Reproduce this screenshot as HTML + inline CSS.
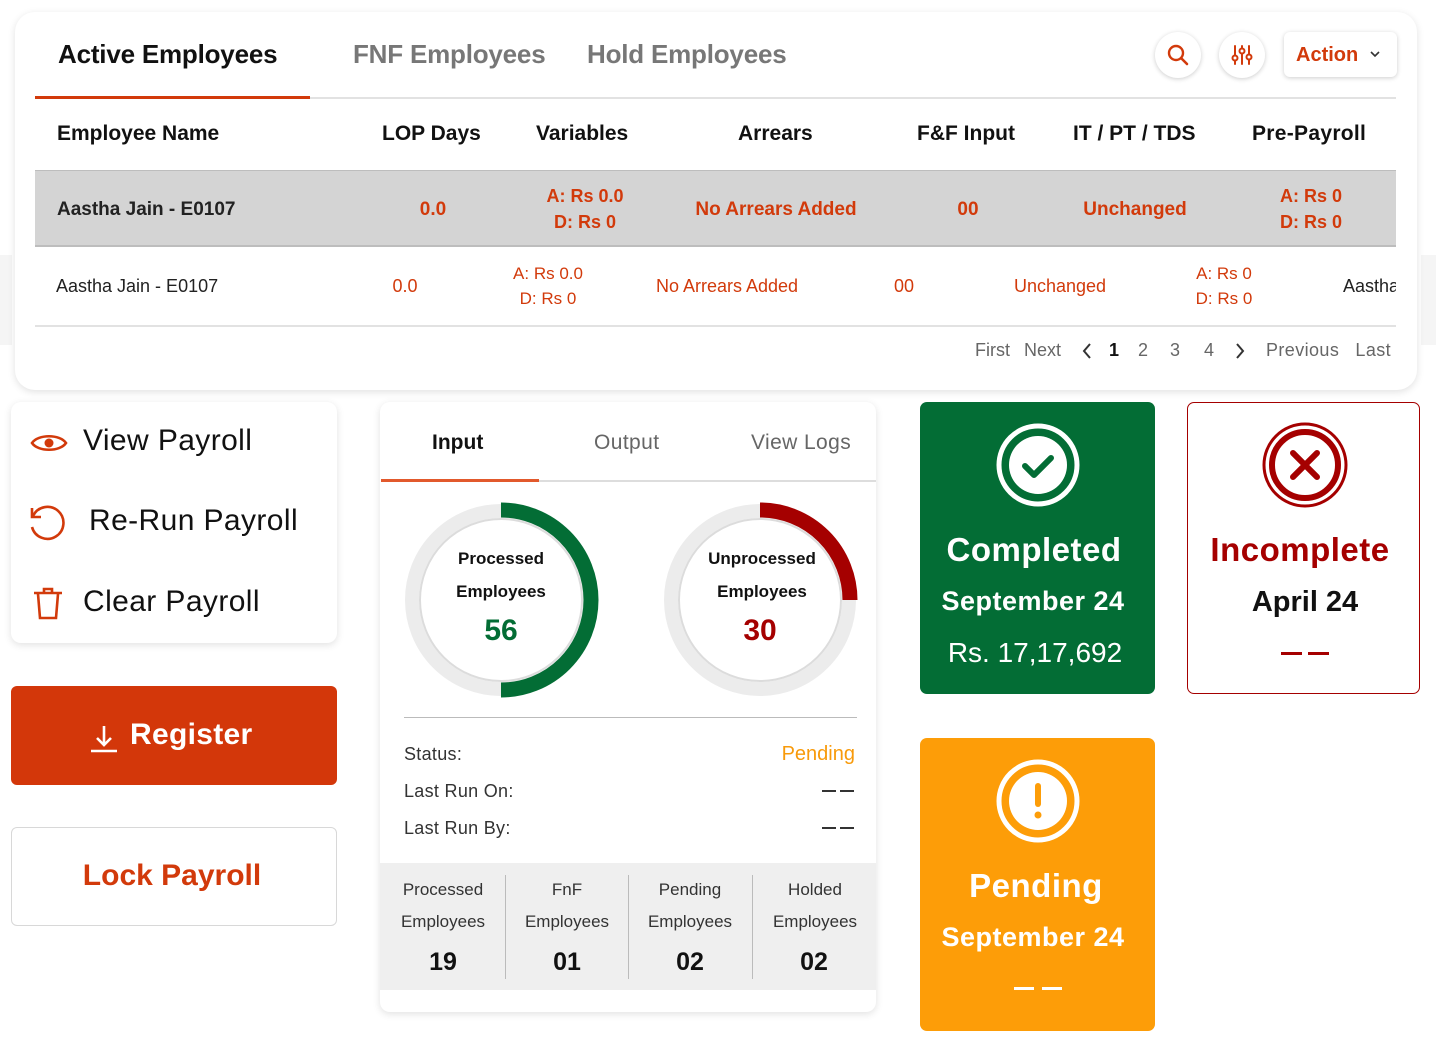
<!DOCTYPE html>
<html><head><meta charset="utf-8">
<style>
*{margin:0;padding:0;box-sizing:border-box}
html,body{width:1436px;height:1059px;background:#fff;overflow:hidden;font-family:"Liberation Sans",sans-serif;color:#111}
.a{position:absolute;white-space:nowrap}
.c{transform:translateX(-50%);text-align:center}
.red{color:#d23a0b}
.card{position:absolute;background:#fff;border-radius:14px;box-shadow:0 2px 8px rgba(0,0,0,.12)}
.b{font-weight:bold}
</style></head><body>

<div class="a" style="left:0;top:255px;width:12px;height:90px;background:#f5f5f5"></div>
<div class="a" style="left:1421px;top:255px;width:15px;height:90px;background:#f5f5f5"></div>

<!-- TOP CARD -->
<div class="card" style="left:15px;top:12px;width:1402px;height:378px;border-radius:20px"></div>
<div class="a b" style="left:58px;top:39px;font-size:26px;color:#111;letter-spacing:-0.2px">Active Employees</div>
<div class="a b" style="left:353px;top:39px;font-size:26px;color:#777;letter-spacing:-0.2px">FNF Employees</div>
<div class="a b" style="left:587px;top:39px;font-size:26px;color:#777;letter-spacing:-0.2px">Hold Employees</div>
<div class="a" style="left:35px;top:97px;width:1361px;height:2px;background:#e2e2e2"></div>
<div class="a" style="left:35px;top:96px;width:275px;height:3px;background:#d23a0b"></div>

<div class="a" style="left:1155px;top:32px;width:46px;height:46px;border-radius:50%;background:#fff;box-shadow:0 1px 5px rgba(0,0,0,.2)">
<svg width="46" height="46" viewBox="0 0 46 46"><circle cx="21" cy="21" r="7" fill="none" stroke="#d23a0b" stroke-width="2.4"/><path d="M26 26l6 6" stroke="#d23a0b" stroke-width="2.6" stroke-linecap="round"/></svg></div>
<div class="a" style="left:1219px;top:32px;width:46px;height:46px;border-radius:50%;background:#fff;box-shadow:0 1px 5px rgba(0,0,0,.2)">
<svg width="46" height="46" viewBox="0 0 46 46" stroke="#d23a0b" stroke-width="2" fill="none" stroke-linecap="round"><path d="M16 14v18M23 14v18M30 14v18"/><circle cx="16" cy="26" r="2.5" fill="#fff"/><circle cx="23" cy="19" r="2.5" fill="#fff"/><circle cx="30" cy="25" r="2.5" fill="#fff"/></svg></div>
<div class="a" style="left:1284px;top:32px;width:113px;height:45px;border-radius:6px;background:#fff;box-shadow:0 1px 5px rgba(0,0,0,.2)"></div>
<div class="a b red" style="left:1296px;top:44px;font-size:20px">Action</div>
<svg class="a" style="left:1369px;top:49px" width="12" height="10" viewBox="0 0 12 10"><path d="M2 3l4 4 4-4" stroke="#333" stroke-width="1.6" fill="none"/></svg>

<div class="a b" style="left:57px;top:122px;font-size:21px">Employee Name</div>
<div class="a b" style="left:382px;top:122px;font-size:21px">LOP Days</div>
<div class="a b" style="left:536px;top:122px;font-size:21px">Variables</div>
<div class="a b" style="left:738px;top:122px;font-size:21px">Arrears</div>
<div class="a b" style="left:917px;top:122px;font-size:21px">F&amp;F Input</div>
<div class="a b" style="left:1073px;top:122px;font-size:21px">IT / PT / TDS</div>
<div class="a b" style="left:1252px;top:122px;font-size:21px;letter-spacing:0.3px">Pre-Payroll</div>

<div class="a" style="left:35px;top:170px;width:1361px;height:77px;background:#d4d4d4;border-top:1px solid #bdbdbd;border-bottom:2px solid #bdbdbd"></div>
<div class="a b" style="left:57px;top:199px;font-size:19px;color:#222">Aastha Jain - E0107</div>
<div class="a b red c" style="left:433px;top:199px;font-size:19px">0.0</div>
<div class="a b red c" style="left:585px;top:183px;font-size:18px;line-height:26px">A: Rs 0.0<br>D: Rs 0</div>
<div class="a b red c" style="left:776px;top:199px;font-size:19px">No Arrears Added</div>
<div class="a b red c" style="left:968px;top:199px;font-size:19px">00</div>
<div class="a b red c" style="left:1135px;top:199px;font-size:19px">Unchanged</div>
<div class="a b red c" style="left:1311px;top:183px;font-size:18px;line-height:26px">A: Rs 0<br>D: Rs 0</div>

<div class="a" style="left:56px;top:276px;font-size:18px;color:#222">Aastha Jain - E0107</div>
<div class="a red c" style="left:405px;top:276px;font-size:18px">0.0</div>
<div class="a red c" style="left:548px;top:261px;font-size:17px;line-height:25px">A: Rs 0.0<br>D: Rs 0</div>
<div class="a red c" style="left:727px;top:276px;font-size:18px">No Arrears Added</div>
<div class="a red c" style="left:904px;top:276px;font-size:18px">00</div>
<div class="a red c" style="left:1060px;top:276px;font-size:18px">Unchanged</div>
<div class="a red c" style="left:1224px;top:261px;font-size:17px;line-height:25px">A: Rs 0<br>D: Rs 0</div>
<div class="a" style="left:1343px;top:276px;width:53px;overflow:hidden;font-size:18px;color:#222">Aastha</div>
<div class="a" style="left:35px;top:325px;width:1361px;height:2px;background:#e2e2e2"></div>

<div class="a" style="left:975px;top:340px;font-size:18px;color:#666;word-spacing:2px">First&nbsp; Next</div>
<svg class="a" style="left:1081px;top:342px" width="12" height="18" viewBox="0 0 12 18"><path d="M9 2L3 9l6 7" stroke="#333" stroke-width="2" fill="none"/></svg>
<div class="a b" style="left:1109px;top:340px;font-size:18px;color:#111">1</div>
<div class="a" style="left:1138px;top:340px;font-size:18px;color:#666">2</div>
<div class="a" style="left:1170px;top:340px;font-size:18px;color:#666">3</div>
<div class="a" style="left:1204px;top:340px;font-size:18px;color:#666">4</div>
<svg class="a" style="left:1234px;top:342px" width="12" height="18" viewBox="0 0 12 18"><path d="M3 2l6 7-6 7" stroke="#333" stroke-width="2" fill="none"/></svg>
<div class="a" style="left:1266px;top:340px;font-size:18px;color:#666;letter-spacing:0.4px">Previous&nbsp;&nbsp; Last</div>

<!-- LEFT MENU -->
<div class="card" style="left:11px;top:402px;width:326px;height:241px;border-radius:10px"></div>
<svg class="a" style="left:30px;top:430px" width="38" height="26" viewBox="0 0 38 26"><path d="M2 13C8 4 30 4 36 13C30 22 8 22 2 13Z" fill="none" stroke="#d23a0b" stroke-width="2.6"/><circle cx="19" cy="13" r="4.5" fill="#d23a0b"/></svg>
<div class="a" style="left:83px;top:424px;font-size:30px;color:#111;letter-spacing:0.4px">View Payroll</div>
<svg class="a" style="left:27px;top:503px" width="40" height="40" viewBox="0 0 40 40"><path d="M6 13A16 16 0 1 1 5 24" fill="none" stroke="#d23a0b" stroke-width="2.6"/><path d="M5 5v9h9" fill="none" stroke="#d23a0b" stroke-width="2.6"/></svg>
<div class="a" style="left:89px;top:504px;font-size:30px;color:#111;letter-spacing:0.4px">Re-Run Payroll</div>
<svg class="a" style="left:32px;top:585px" width="32" height="36" viewBox="0 0 32 36"><path d="M2 8h28M12 8V4h8v4M6 9l2 24h16l2-24" fill="none" stroke="#d23a0b" stroke-width="2.6"/></svg>
<div class="a" style="left:83px;top:585px;font-size:30px;color:#111;letter-spacing:0.4px">Clear Payroll</div>

<div class="a" style="left:11px;top:686px;width:326px;height:99px;background:#d3370a;border-radius:6px"></div>
<svg class="a" style="left:90px;top:723px" width="28" height="30" viewBox="0 0 28 30"><path d="M14 3v19M7 15l7 7 7-7M1 28h26" fill="none" stroke="#fff" stroke-width="2.6"/></svg>
<div class="a b" style="left:130px;top:718px;font-size:30px;color:#fff;letter-spacing:0.3px">Register</div>

<div class="a" style="left:11px;top:827px;width:326px;height:99px;border:1px solid #d8d8d8;border-radius:6px;background:#fff"></div>
<div class="a b red c" style="left:172px;top:859px;font-size:30px">Lock Payroll</div>

<!-- MIDDLE CARD -->
<div class="card" style="left:380px;top:402px;width:496px;height:610px;border-radius:10px;overflow:hidden">
 <div style="position:absolute;left:0;top:461px;width:496px;height:127px;background:#efefef"></div>
</div>
<div class="a b" style="left:432px;top:431px;font-size:21px;color:#111">Input</div>
<div class="a" style="left:594px;top:431px;font-size:21px;color:#666;letter-spacing:0.4px">Output</div>
<div class="a" style="left:751px;top:431px;font-size:21px;color:#666;letter-spacing:0.4px">View Logs</div>
<div class="a" style="left:381px;top:480px;width:495px;height:2px;background:#ddd"></div>
<div class="a" style="left:381px;top:479px;width:158px;height:3px;background:#e2592c"></div>

<svg class="a" style="left:400px;top:500px" width="470" height="200" viewBox="0 0 470 200">
 <circle cx="101" cy="100" r="89" fill="none" stroke="#ececec" stroke-width="14"/>
 <circle cx="101" cy="100" r="81" fill="none" stroke="#dcdcdc" stroke-width="2"/>
 <path d="M101 10A90 90 0 0 1 101 190" fill="none" stroke="#036d35" stroke-width="15"/>
 <circle cx="360" cy="100" r="89" fill="none" stroke="#ececec" stroke-width="14"/>
 <circle cx="360" cy="100" r="81" fill="none" stroke="#dcdcdc" stroke-width="2"/>
 <path d="M360 10A90 90 0 0 1 450 100" fill="none" stroke="#a50000" stroke-width="15"/>
</svg>
<div class="a b c" style="left:501px;top:542px;font-size:17px;line-height:33px">Processed<br>Employees</div>
<div class="a b c" style="left:501px;top:614px;font-size:30px;color:#036d35">56</div>
<div class="a b c" style="left:762px;top:542px;font-size:17px;line-height:33px">Unprocessed<br>Employees</div>
<div class="a b c" style="left:760px;top:614px;font-size:30px;color:#a50000">30</div>

<div class="a" style="left:404px;top:717px;width:453px;height:1px;background:#bbb"></div>
<div class="a" style="left:404px;top:744px;font-size:18px;color:#333;letter-spacing:0.3px">Status:</div>
<div class="a" style="left:755px;top:743px;width:100px;text-align:right;font-size:20px;color:#f89a0a">Pending</div>
<div class="a" style="left:404px;top:781px;font-size:18px;color:#333;letter-spacing:0.3px">Last Run On:</div>
<div class="a" style="left:822px;top:790px;width:32px;height:2px;border-left:14px solid #333;border-right:14px solid #333"></div>
<div class="a" style="left:404px;top:818px;font-size:18px;color:#333;letter-spacing:0.3px">Last Run By:</div>
<div class="a" style="left:822px;top:827px;width:32px;height:2px;border-left:14px solid #333;border-right:14px solid #333"></div>

<div class="a" style="left:505px;top:875px;width:1px;height:104px;background:#bbb"></div>
<div class="a" style="left:628px;top:875px;width:1px;height:104px;background:#bbb"></div>
<div class="a" style="left:752px;top:875px;width:1px;height:104px;background:#bbb"></div>
<div class="a c" style="left:443px;top:874px;font-size:17px;line-height:32px;color:#333">Processed<br>Employees</div>
<div class="a c" style="left:567px;top:874px;font-size:17px;line-height:32px;color:#333">FnF<br>Employees</div>
<div class="a c" style="left:690px;top:874px;font-size:17px;line-height:32px;color:#333">Pending<br>Employees</div>
<div class="a c" style="left:815px;top:874px;font-size:17px;line-height:32px;color:#333">Holded<br>Employees</div>
<div class="a b c" style="left:443px;top:948px;font-size:25px">19</div>
<div class="a b c" style="left:567px;top:948px;font-size:25px">01</div>
<div class="a b c" style="left:690px;top:948px;font-size:25px">02</div>
<div class="a b c" style="left:814px;top:948px;font-size:25px">02</div>

<!-- COMPLETED -->
<div class="a" style="left:920px;top:402px;width:235px;height:292px;background:#036d35;border-radius:7px"></div>
<svg class="a" style="left:996px;top:423px" width="84" height="84" viewBox="0 0 84 84"><circle cx="42" cy="42" r="39" fill="none" stroke="#fff" stroke-width="5"/><circle cx="42" cy="42" r="29" fill="#fff"/><path d="M29 43l9 9 17-17" fill="none" stroke="#036d35" stroke-width="6" stroke-linecap="round" stroke-linejoin="round"/></svg>
<div class="a b c" style="left:1034px;top:531px;font-size:33px;color:#fff;letter-spacing:0.5px">Completed</div>
<div class="a b c" style="left:1033px;top:586px;font-size:27px;color:#fff;letter-spacing:0.5px">September 24</div>
<div class="a c" style="left:1035px;top:637px;font-size:28px;color:#fff">Rs. 17,17,692</div>

<!-- INCOMPLETE -->
<div class="a" style="left:1187px;top:402px;width:233px;height:292px;border:1.5px solid #a50000;border-radius:7px;background:#fff"></div>
<svg class="a" style="left:1261px;top:421px" width="88" height="88" viewBox="0 0 88 88"><circle cx="44" cy="44" r="41" fill="none" stroke="#a50000" stroke-width="3"/><circle cx="44" cy="44" r="33" fill="none" stroke="#a50000" stroke-width="6"/><path d="M32 32l24 24M56 32L32 56" stroke="#a50000" stroke-width="6" stroke-linecap="round"/></svg>
<div class="a b c" style="left:1300px;top:531px;font-size:33px;color:#a50000;letter-spacing:0.5px">Incomplete</div>
<div class="a b c" style="left:1305px;top:586px;font-size:29px;color:#111">April 24</div>
<div class="a" style="left:1281px;top:652px;width:48px;height:3px;border-left:21px solid #a50000;border-right:21px solid #a50000"></div>

<!-- PENDING -->
<div class="a" style="left:920px;top:738px;width:235px;height:293px;background:#fd9d08;border-radius:7px"></div>
<svg class="a" style="left:996px;top:759px" width="84" height="84" viewBox="0 0 84 84"><circle cx="42" cy="42" r="39" fill="none" stroke="#fff" stroke-width="5"/><circle cx="42" cy="42" r="29" fill="#fff"/><path d="M42 27v18" stroke="#fd9d08" stroke-width="6" stroke-linecap="round"/><circle cx="42" cy="56" r="3.5" fill="#fd9d08"/></svg>
<div class="a b c" style="left:1036px;top:867px;font-size:33px;color:#fff;letter-spacing:0.5px">Pending</div>
<div class="a b c" style="left:1033px;top:922px;font-size:27px;color:#fff;letter-spacing:0.5px">September 24</div>
<div class="a" style="left:1014px;top:987px;width:48px;height:3px;border-left:20px solid #fff;border-right:20px solid #fff"></div>

</body></html>
